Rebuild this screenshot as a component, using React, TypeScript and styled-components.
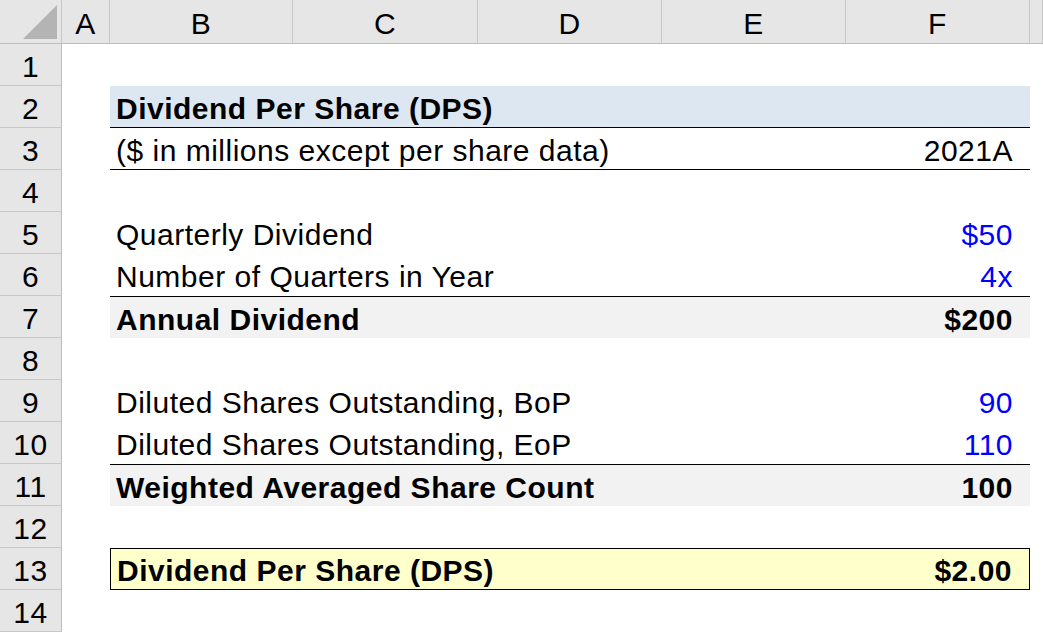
import styled, { createGlobalStyle } from "styled-components";

const Global = createGlobalStyle`
  body { margin: 0; background: #fff; font-family: "Liberation Sans", Arial, sans-serif; }
`;

const Sheet = styled.div`
  width: 1043px;
  height: 637px;
  overflow: hidden;
  font-size: 30px;
  letter-spacing: 0.5px;
  color: #000;
`;

const HeaderRow = styled.div`
  display: grid;
  grid-template-columns: 62px 48px 183px 185px 184px 184px 184px 1fr;
  height: 44px;
  background: #e6e6e6;
  border-bottom: 1px solid #bcbcbc;
  box-sizing: border-box;
`;

const ColHead = styled.div`
  display: flex;
  align-items: center;
  justify-content: center;
  border-right: 1px solid #c8c8c8;
  padding-top: 4px;
`;

const Corner = styled.div`
  position: relative;
  border-right: 1px solid #c8c8c8;
  svg { position: absolute; right: 4px; bottom: 4px; }
`;

const Row = styled.div`
  display: grid;
  grid-template-columns: 62px 48px 920px 1fr;
  height: 42px;
`;

const RowHead = styled.div`
  background: #e6e6e6;
  border-right: 1px solid #bcbcbc;
  border-bottom: 1px solid #c8c8c8;
  display: flex;
  align-items: center;
  justify-content: center;
  padding-top: 4px;
`;

type Kind = "plain" | "title" | "sub" | "total" | "result" | "empty";

const Content = styled.div<{ $kind: Kind; $topLine?: boolean }>`
  display: flex;
  align-items: center;
  justify-content: space-between;
  padding: 4px 17px 0 6px;
  box-sizing: border-box;
  font-weight: ${(p) => (p.$kind === "title" || p.$kind === "total" || p.$kind === "result" ? 700 : 400)};
  background: ${(p) =>
    p.$kind === "title" ? "#dde7f1" : p.$kind === "total" ? "#f2f2f2" : p.$kind === "result" ? "#ffffcc" : "transparent"};
  border-bottom: ${(p) => (p.$kind === "title" || p.$kind === "sub" ? "1px solid #000" : "none")};
  border-top: ${(p) => (p.$topLine ? "1px solid #000" : "none")};
  ${(p) => p.$kind === "result" && "border: 1px solid #000; height: 42px;"}
`;

const Value = styled.span<{ $blue?: boolean }>`
  color: ${(p) => (p.$blue ? "#0000ff" : "#000")};
`;

type Line = { kind: Kind; label?: string; value?: string; blue?: boolean; topLine?: boolean };

const lines: Line[] = [
  { kind: "empty" },
  { kind: "title", label: "Dividend Per Share (DPS)" },
  { kind: "sub", label: "($ in millions except per share data)", value: "2021A" },
  { kind: "empty" },
  { kind: "plain", label: "Quarterly Dividend", value: "$50", blue: true },
  { kind: "plain", label: "Number of Quarters in Year", value: "4x", blue: true },
  { kind: "total", label: "Annual Dividend", value: "$200", topLine: true },
  { kind: "empty" },
  { kind: "plain", label: "Diluted Shares Outstanding, BoP", value: "90", blue: true },
  { kind: "plain", label: "Diluted Shares Outstanding, EoP", value: "110", blue: true },
  { kind: "total", label: "Weighted Averaged Share Count", value: "100", topLine: true },
  { kind: "empty" },
  { kind: "result", label: "Dividend Per Share (DPS)", value: "$2.00" },
  { kind: "empty" },
];

const App = () => (
  <Sheet>
    <Global />
    <HeaderRow>
      <Corner>
        <svg width="34" height="34" viewBox="0 0 34 34">
          <polygon points="34,0 34,34 0,34" fill="#b4b4b4" />
        </svg>
      </Corner>
      {["A", "B", "C", "D", "E", "F", ""].map((c, i) => (
        <ColHead key={i}>{c}</ColHead>
      ))}
    </HeaderRow>
    {lines.map((l, i) => (
      <Row key={i}>
        <RowHead>{i + 1}</RowHead>
        <div />
        <Content $kind={l.kind} $topLine={l.topLine}>
          <span>{l.label}</span>
          {l.value && <Value $blue={l.blue}>{l.value}</Value>}
        </Content>
        <div />
      </Row>
    ))}
  </Sheet>
);

export default App;
